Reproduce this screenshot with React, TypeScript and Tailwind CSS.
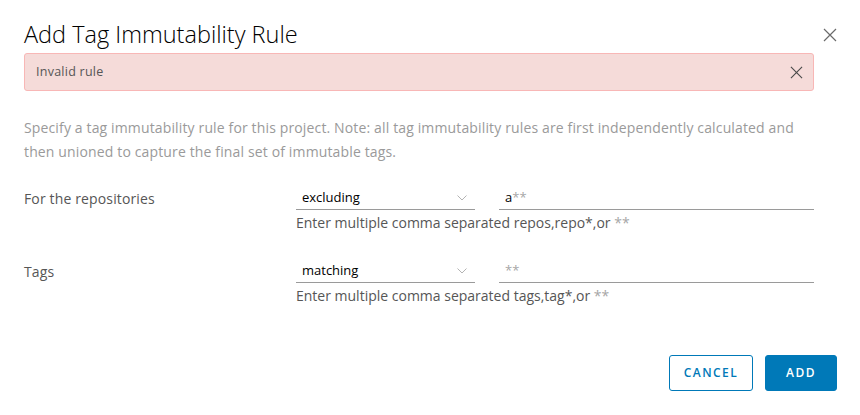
import React from 'react';

const font = { fontFamily: '"Open Sans", "Liberation Sans", sans-serif' };

function XIcon({ size, className }: { size: number; className?: string }) {
  return (
    <svg width={size} height={size} viewBox="0 0 14 14" className={className} fill="none">
      <path d="M1 1 L13 13 M13 1 L1 13" stroke="currentColor" strokeWidth="1.2" />
    </svg>
  );
}

function Chevron() {
  return (
    <svg width="10" height="6" viewBox="0 0 10 6" fill="none" className="text-[#b3b3b3]">
      <path d="M0.5 0.5 L5 5 L9.5 0.5" stroke="currentColor" strokeWidth="1" />
    </svg>
  );
}

const Stars = () => <span className="text-[#a6a6a6]">**</span>;

function FormRow({
  label,
  option,
  value,
  hint,
}: {
  label: string;
  option: string;
  value: React.ReactNode;
  hint: React.ReactNode;
}) {
  return (
    <div className="flex">
      <div className="w-[272px] pt-[1px] text-[14px] leading-[24px] tracking-[0.01em] text-[#565656]">{label}</div>
      <div className="flex flex-col">
        <div className="flex gap-[24px]">
          <div className="flex h-[24px] w-[179px] items-center justify-between border-b border-[#9a9a9a] pl-[6px] pr-[8px] text-[13px] text-black">
            <span>{option}</span>
            <Chevron />
          </div>
          <div className="flex h-[24px] w-[315px] items-center border-b border-[#9a9a9a] pl-[6px] text-[13px] text-black">
            {value}
          </div>
        </div>
        <div className="pt-[1px] text-[14px] leading-[24px] text-[#565656]">{hint}</div>
      </div>
    </div>
  );
}

export default function App() {
  return (
    <div className="h-[415px] w-[860px] bg-white pl-[24px] pr-[23px]" style={font}>
      <div className="flex items-start justify-between pt-[18px]">
        <h3 className="text-[23.5px] font-light leading-[32px] text-black">Add Tag Immutability Rule</h3>
        <button className="mt-[10px] text-[#6a6a6a]">
          <XIcon size={14} />
        </button>
      </div>

      <div className="mr-[23px] mt-[3px] flex h-[38px] items-center justify-between rounded-[3px] border border-[#f8b7b6] bg-[#f5dbd9] pl-[11px] pr-[10px]">
        <span className="text-[12.5px] tracking-[0.02em] text-[#565656]">Invalid rule</span>
        <XIcon size={13} className="text-[#4a4a4a]" />
      </div>

      <p className="mr-[23px] mt-[25px] text-[14px] leading-[24px] tracking-[0.01em] text-[#9a9a9a]">
        Specify a tag immutability rule for this project. Note: all tag immutability rules are first independently
        calculated and then unioned to capture the final set of immutable tags.
      </p>

      <div className="mt-[22px] flex flex-col gap-[24px]">
        <FormRow
          label="For the repositories"
          option="excluding"
          value={
            <span>
              a<Stars />
            </span>
          }
          hint={
            <>
              Enter multiple comma separated repos,repo*,or <Stars />
            </>
          }
        />
        <FormRow
          label="Tags"
          option="matching"
          value={<Stars />}
          hint={
            <>
              Enter multiple comma separated tags,tag*,or <Stars />
            </>
          }
        />
      </div>

      <div className="mt-[47px] flex justify-end gap-[12px]">
        <button className="h-[36px] w-[84px] rounded-[3px] border border-[#0079b8] text-[12px] font-semibold tracking-[0.12em] text-[#0079b8]">
          CANCEL
        </button>
        <button className="h-[36px] w-[72px] rounded-[3px] border border-[#0079b8] bg-[#0079b8] text-[12px] font-semibold tracking-[0.12em] text-white">
          ADD
        </button>
      </div>
    </div>
  );
}
